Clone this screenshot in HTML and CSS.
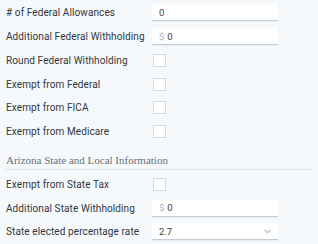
FILE: index.html
```html
<!DOCTYPE html>
<html>
<head>
<meta charset="utf-8">
<link rel="stylesheet" href="styles.css">
</head>
<body>
<div class="form">
  <div class="row"><div class="label"># of Federal Allowances</div><div class="input"><span class="val">0</span></div></div>
  <div class="row"><div class="label">Additional Federal Withholding</div><div class="input"><span class="cur">$</span><span class="val">0</span></div></div>
  <div class="row"><div class="label">Round Federal Withholding</div><div class="check"></div></div>
  <div class="row"><div class="label">Exempt from Federal</div><div class="check"></div></div>
  <div class="row"><div class="label">Exempt from FICA</div><div class="check"></div></div>
  <div class="row"><div class="label">Exempt from Medicare</div><div class="check"></div></div>
  <div class="heading">Arizona State and Local Information</div>
  <div class="row"><div class="label">Exempt from State Tax</div><div class="check"></div></div>
  <div class="row"><div class="label">Additional State Withholding</div><div class="input"><span class="cur">$</span><span class="val">0</span></div></div>
  <div class="row"><div class="label">State elected percentage rate</div><div class="input select"><span class="val">2.7</span>
    <svg class="chev" width="7" height="5" viewBox="0 0 7 5"><path d="M0.5 0.8 L3.5 3.8 L6.5 0.8" fill="none" stroke="#8a949e" stroke-width="1"/></svg></div></div>
</div>
</body>
</html>
```
FILE: styles.css
```css
html, body {
  margin: 0;
  padding: 0;
  background: #f6f9fc;
}
body {
  width: 318px;
  height: 244px;
  overflow: hidden;
  font-family: Roboto, "Liberation Sans", sans-serif;
  color: #333a40;
}
.form {
  padding: 1px 0 0 6px;
  display: flex;
  flex-direction: column;
}
.row {
  display: grid;
  grid-template-columns: 146px 126px;
  align-items: center;
  height: 23.75px;
}
.label {
  font-size: 10px;
  color: #30373d;
  letter-spacing: 0.1px;
}
.input {
  height: 16px;
  background: #fff;
  border-bottom: 1px solid #c4ccd4;
  box-shadow: 0 1px 1px rgba(0,0,0,0.04);
  display: flex;
  align-items: center;
  padding-left: 7px;
  font-size: 9.5px;
  box-sizing: content-box;
}
.cur {
  color: #b0b6bc;
  margin-right: 3px;
}
.val {
  color: #3a4046;
}
.select {
  justify-content: space-between;
  padding-right: 7px;
  width: 112px;
}
.check {
  width: 11px;
  height: 11px;
  background: #fff;
  border: 1px solid #d4d9de;
  margin-left: 1px;
}
.heading {
  font-family: "Liberation Serif", serif;
  font-size: 11px;
  line-height: 13px;
  color: #6a7076;
  margin: 10px 6px 3px -2px;
  padding: 0 0 2px 2px;
  border-bottom: 1px solid #e0e5ea;
}
```
